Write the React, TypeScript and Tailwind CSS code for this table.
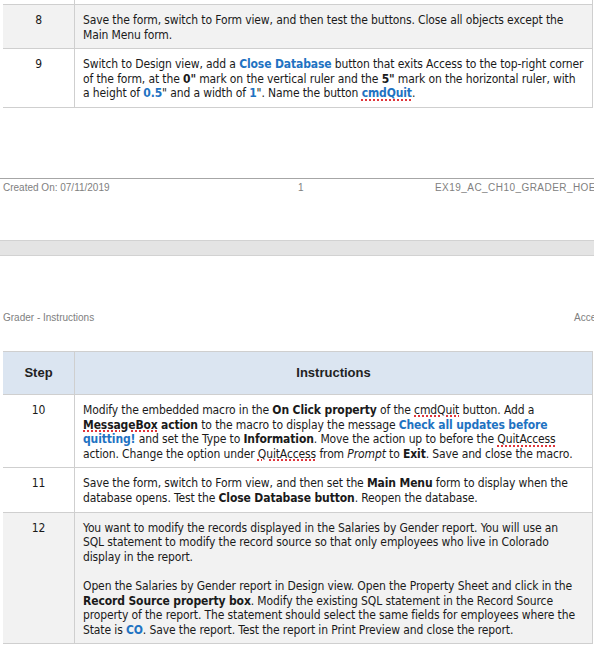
const body = "font-['DejaVu_Sans_Condensed','DejaVu_Sans',Verdana,sans-serif] text-[12px] leading-[14.6px] tracking-[-0.12px] text-[#1a1a1a]";
const blue = 'font-bold text-[#1f73c2]';
const squiggle = 'underline decoration-dotted decoration-[#e0353b] decoration-[1.5px] underline-offset-[2px]';
const footer = "font-['Liberation_Sans',Arial,sans-serif] text-[10px] leading-[12px] text-[#808080]";

function Row({ step, gray, children }: { step: string; gray?: boolean; children: React.ReactNode }) {
  return (
    <div className={`flex border-b border-[#cfcfcf] ${gray ? 'bg-[#f2f2f2]' : 'bg-white'}`}>
      <div className="w-[72px] shrink-0 border-r border-[#cfcfcf] pt-[8px] text-center">{step}</div>
      <div className="min-w-0 flex-1 whitespace-nowrap pb-[6px] pl-[8px] pt-[8px]">{children}</div>
    </div>
  );
}

export default function App() {
  return (
    <div className={`h-[645px] w-[594px] overflow-hidden bg-white ${body}`}>
      {/* page 1 bottom */}
      <div className="ml-[3px] w-[590px] border-r border-[#cfcfcf]">
        <div className="flex h-[5px] border-b border-[#cfcfcf]">
          <div className="w-[72px] border-r border-[#cfcfcf]" />
        </div>
        <Row step="8" gray>
          Save the form, switch to Form view, and then test the buttons. Close all objects except the
          <br />
          Main Menu form.
        </Row>
        <Row step="9">
          Switch to Design view, add a <span className={blue}>Close Database</span> button that exits Access to the top-right corner
          <br />
          of the form, at the <b>0"</b> mark on the vertical ruler and the <b>5"</b> mark on the horizontal ruler, with
          <br />
          a height of <span className={blue}>0.5</span>" and a width of <span className={blue}>1</span>". Name the button{' '}
          <span className={`${blue} ${squiggle}`}>cmdQuit</span>.
        </Row>
      </div>

      <div className={`mt-[70px] flex overflow-hidden whitespace-nowrap border-t border-[#a6a6a6] pl-[3px] pt-[3px] tracking-normal ${footer}`}>
        <span className="w-[295px] shrink-0">Created On: 07/11/2019</span>
        <span className="w-[137px] shrink-0">1</span>
        <span className="shrink-0 tracking-[0.45px]">EX19_AC_CH10_GRADER_HOE</span>
      </div>

      <div className="mt-[46px] h-[16px] border-y border-[#d2d2d2] bg-[#e4e4e4]" />

      {/* page 2 top */}
      <div className={`mt-[56px] flex overflow-hidden whitespace-nowrap pl-[3px] tracking-normal ${footer}`}>
        <span className="w-[571px] shrink-0">Grader - Instructions</span>
        <span className="shrink-0">Access</span>
      </div>

      <div className="ml-[3px] mt-[27px] w-[590px] border-r border-t border-[#cfcfcf]">
        <div className="flex h-[43px] border-b border-[#cfcfcf] bg-[#dbe5f1] font-['Liberation_Sans',Arial,sans-serif] text-[13px] font-bold tracking-normal text-[#222]">
          <div className="flex w-[72px] shrink-0 items-center justify-center border-r border-[#cfcfcf]">Step</div>
          <div className="flex flex-1 items-center justify-center">Instructions</div>
        </div>
        <Row step="10">
          Modify the embedded macro in the <b>On Click property</b> of the <span className={squiggle}>cmdQuit</span> button. Add a
          <br />
          <b className={squiggle}>MessageBox</b> <b>action</b> to the macro to display the message <span className={blue}>Check all updates before</span>
          <br />
          <span className={blue}>quitting!</span> and set the Type to <b>Information</b>. Move the action up to before the <span className={squiggle}>QuitAccess</span>
          <br />
          action. Change the option under <span className={squiggle}>QuitAccess</span> from <i>Prompt</i> to <b>Exit</b>. Save and close the macro.
        </Row>
        <Row step="11">
          Save the form, switch to Form view, and then set the <b>Main Menu</b> form to display when the
          <br />
          database opens. Test the <b>Close Database button</b>. Reopen the database.
        </Row>
        <Row step="12" gray>
          You want to modify the records displayed in the Salaries by Gender report. You will use an
          <br />
          SQL statement to modify the record source so that only employees who live in Colorado
          <br />
          display in the report.
          <div className="mt-[14.6px]">
            Open the Salaries by Gender report in Design view. Open the Property Sheet and click in the
            <br />
            <b>Record Source property box</b>. Modify the existing SQL statement in the Record Source
            <br />
            property of the report. The statement should select the same fields for employees where the
            <br />
            State is <span className={blue}>CO</span>. Save the report. Test the report in Print Preview and close the report.
          </div>
        </Row>
      </div>
    </div>
  );
}
